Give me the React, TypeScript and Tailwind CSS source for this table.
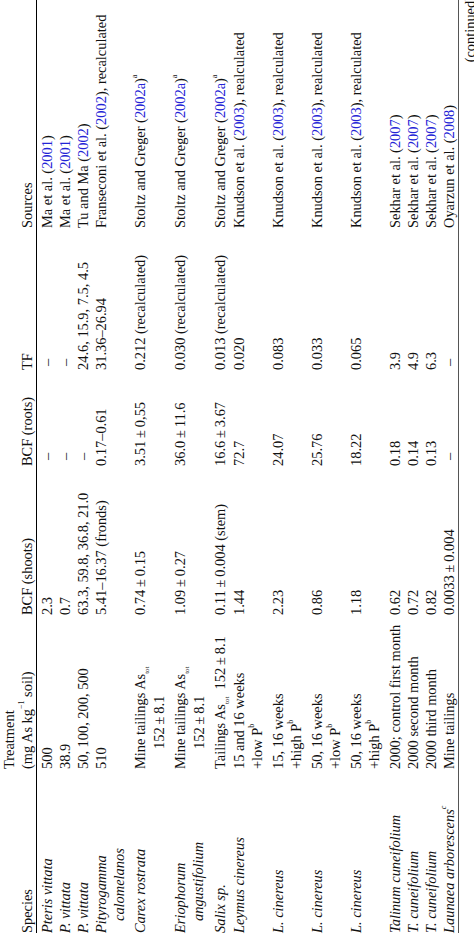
import React from "react";

const LINK = "text-[#2323d6]";

const Sup = ({ children }: { children: React.ReactNode }) => (
  <sup className="text-[8px] leading-none align-[4px]">{children}</sup>
);
const Sub = ({ children }: { children: React.ReactNode }) => (
  <sub className="text-[7px] leading-none align-[-3px]">{children}</sub>
);

const ts = "\u2009±\u2009";

const Dash1 = () => <div className="pl-[6px]">–</div>;
const Dash2 = () => <div className="pl-[4px]">–</div>;

const ma = (
  <div>
    Ma et al. (<span className={LINK}>2001</span>)
  </div>
);
const stoltz = (
  <div>
    Stoltz and Greger (<span className={LINK}>2002a</span>)<Sup>a</Sup>
  </div>
);
const knud = (
  <div className="whitespace-nowrap">
    Knudson et al. (<span className={LINK}>2003</span>), realculated
  </div>
);
const sekhar = (
  <div>
    Sekhar et al. (<span className={LINK}>2007</span>)
  </div>
);

const mineTot = (
  <>
    <div>
      Mine tailings As<Sub>tot</Sub>
    </div>
    <div className="pl-[20px]">152{ts}8.1</div>
  </>
);

type Row = { cells: React.ReactNode[]; multi?: boolean };

const rows: Row[] = [
  {
    cells: [<div>Pteris vittata</div>, <div>500</div>, <div>2.3</div>, <Dash1 />, <Dash2 />, ma],
  },
  {
    cells: [<div>P. vittata</div>, <div>38.9</div>, <div>0.7</div>, <Dash1 />, <Dash2 />, ma],
  },
  {
    cells: [
      <div>P. vittata</div>,
      <div>50, 100, 200, 500</div>,
      <div className="whitespace-nowrap">63.3, 59.8, 36.8, 21.0</div>,
      <Dash1 />,
      <div className="whitespace-nowrap">24.6, 15.9, 7.5, 4.5</div>,
      <div>
        Tu and Ma (<span className={LINK}>2002</span>)
      </div>,
    ],
  },
  {
    multi: true,
    cells: [
      <>
        <div>Pityrogamma</div>
        <div className="pl-[12px]">calomelanos</div>
      </>,
      <div>510</div>,
      <div className="whitespace-nowrap">5.41–16.37 (fronds)</div>,
      <div>0.17–0.61</div>,
      <div>31.36–26.94</div>,
      <div className="whitespace-nowrap">
        Franseconi et al. (<span className={LINK}>2002</span>), recalculated
      </div>,
    ],
  },
  {
    multi: true,
    cells: [
      <div>Carex rostrata</div>,
      mineTot,
      <div>0.74{ts}0.15</div>,
      <div>3.51{ts}0,55</div>,
      <div className="whitespace-nowrap">0.212 (recalculated)</div>,
      stoltz,
    ],
  },
  {
    multi: true,
    cells: [
      <>
        <div>Eriophorum</div>
        <div className="pl-[12px]">angustifolium</div>
      </>,
      mineTot,
      <div>1.09{ts}0.27</div>,
      <div>36.0{ts}11.6</div>,
      <div className="whitespace-nowrap">0.030 (recalculated)</div>,
      stoltz,
    ],
  },
  {
    cells: [
      <div>Salix sp.</div>,
      <div className="whitespace-nowrap">
        Tailings As<Sub>tot</Sub>&nbsp; 152{ts}8.1
      </div>,
      <div className="whitespace-nowrap">0.11{ts}0.004 (stem)</div>,
      <div>16.6{ts}3.67</div>,
      <div className="whitespace-nowrap">0.013 (recalculated)</div>,
      stoltz,
    ],
  },
  {
    multi: true,
    cells: [
      <div>Leymus cinereus</div>,
      <>
        <div>15 and 16 weeks</div>
        <div>
          +low P<Sup>b</Sup>
        </div>
      </>,
      <div>1.44</div>,
      <div>72.7</div>,
      <div>0.020</div>,
      knud,
    ],
  },
  {
    multi: true,
    cells: [
      <div>L. cinereus</div>,
      <>
        <div>15, 16 weeks</div>
        <div>
          +high P<Sup>b</Sup>
        </div>
      </>,
      <div>2.23</div>,
      <div>24.07</div>,
      <div>0.083</div>,
      knud,
    ],
  },
  {
    multi: true,
    cells: [
      <div>L. cinereus</div>,
      <>
        <div>50, 16 weeks</div>
        <div>
          +low P<Sup>b</Sup>
        </div>
      </>,
      <div>0.86</div>,
      <div>25.76</div>,
      <div>0.033</div>,
      knud,
    ],
  },
  {
    multi: true,
    cells: [
      <div>L. cinereus</div>,
      <>
        <div>50, 16 weeks</div>
        <div>
          +high P<Sup>b</Sup>
        </div>
      </>,
      <div>1.18</div>,
      <div>18.22</div>,
      <div>0.065</div>,
      knud,
    ],
  },
  {
    cells: [
      <div className="whitespace-nowrap">Talinum cuneifolium</div>,
      <div className="whitespace-nowrap">2000; control first month</div>,
      <div>0.62</div>,
      <div>0.18</div>,
      <div>3.9</div>,
      sekhar,
    ],
  },
  {
    cells: [
      <div>T. cuneifolium</div>,
      <div>2000 second month</div>,
      <div>0.72</div>,
      <div>0.14</div>,
      <div>4.9</div>,
      sekhar,
    ],
  },
  {
    cells: [
      <div>T. cuneifolium</div>,
      <div>2000 third month</div>,
      <div>0.82</div>,
      <div>0.13</div>,
      <div>6.3</div>,
      sekhar,
    ],
  },
  {
    cells: [
      <div className="whitespace-nowrap">
        Launaea arborescens<Sup>c</Sup>
      </div>,
      <div>Mine tailings</div>,
      <div className="whitespace-nowrap">0.0033{ts}0.004</div>,
      <Dash1 />,
      <Dash2 />,
      <div>
        Oyarzun et al. (<span className={LINK}>2008</span>)
      </div>,
    ],
  },
];

const GRID = "grid grid-cols-[164px_154px_149px_96px_142px_230px]";

export default function App() {
  return (
    <div className="w-[474px] h-[937px] overflow-hidden bg-white">
      <div
        className="w-[937px] h-[474px] origin-top-left -rotate-90 translate-y-[937px] bg-white text-[#111] text-[14.4px] leading-[18px] pl-[2px]"
        style={{ fontFamily: '"Liberation Serif", "Times New Roman", serif' }}
      >
        <div className="-mt-[2px]">
          <div className={`${GRID} border-b-[1.5px] border-black`}>
            <div className="pt-[18px]">Species</div>
            <div>
              <div>Treatment</div>
              <div className="whitespace-nowrap">
                (mg As kg<Sup>−1</Sup> soil)
              </div>
            </div>
            <div className="pt-[18px] whitespace-nowrap">BCF (shoots)</div>
            <div className="pt-[18px] whitespace-nowrap">BCF (roots)</div>
            <div className="pt-[18px]">TF</div>
            <div className="pt-[18px]">Sources</div>
          </div>
          <div className="pt-[0.5px] border-b-[1.5px] border-[#555]">
            {rows.map((r, i) => (
              <div key={i} className={`${GRID} ${r.multi ? "pb-[3px]" : ""}`}>
                {r.cells.map((c, j) => (
                  <div key={j} className={j === 0 ? "italic" : ""}>
                    {c}
                  </div>
                ))}
              </div>
            ))}
          </div>
          <div className="text-right mr-[-2px] pt-[2px]">(continued)</div>
        </div>
      </div>
    </div>
  );
}
